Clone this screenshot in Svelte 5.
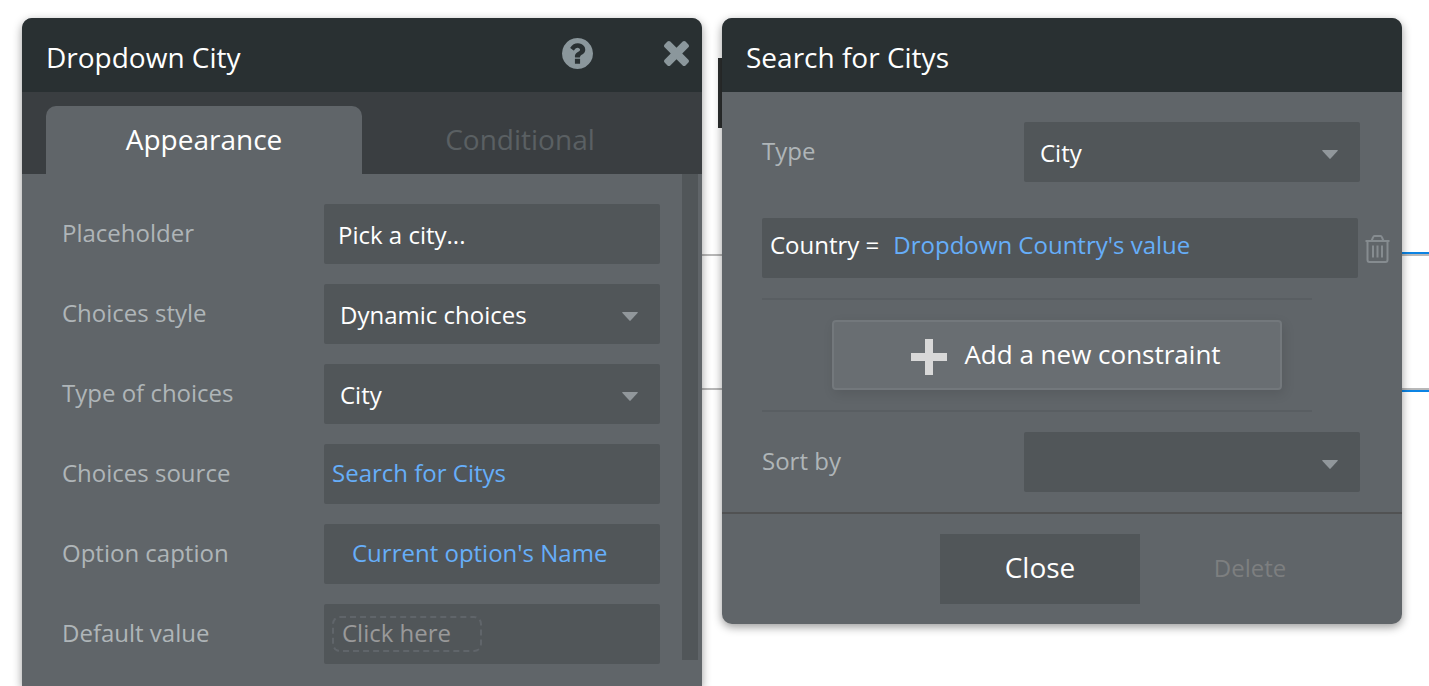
<script lang="ts">
	let placeholder = $state('Pick a city...');
	let choicesStyle = $state('Dynamic choices');
	let choicesType = $state('City');
	let searchType = $state('City');
	let sortBy = $state('');
	let activeTab = $state('Appearance');

	const tabs = ['Appearance', 'Conditional'];
</script>

{#snippet caret()}
	<svg class="caret" viewBox="0 0 16 9" aria-hidden="true">
		<path d="M0.8 0h14.4q0.8 0 0.6 0.8L8.6 8.6q-0.6 0.6-1.2 0L0.2 0.8Q0 0 0.8 0z" />
	</svg>
{/snippet}

<main>
	<div class="canvas" aria-hidden="true">
		<div class="heading-block"></div>
		<div class="outline"></div>
		<div class="selection"></div>
	</div>

	<section class="panel editor">
		<header>
			<h2>Dropdown City</h2>
			<button class="icon" aria-label="Help">
				<svg width="31" height="31" viewBox="128 128 1536 1536">
					<path
						d="M1024 1376v-192q0-14-9-23t-23-9h-192q-14 0-23 9t-9 23v192q0 14 9 23t23 9h192q14 0 23-9t9-23zm256-672q0-88-55.5-163t-138.5-116-170-41q-243 0-371 213-15 24 8 42l132 100q7 6 19 6 16 0 25-12 53-68 86-92 34-24 86-24 48 0 85.5 26t37.5 59q0 38-20 61t-68 45q-63 28-115.5 86.5t-52.5 125.5v36q0 14 9 23t23 9h192q14 0 23-9t9-23q0-19 21.5-49.5t54.5-49.5q32-18 49-28.5t46-35 44.5-48 28-60.5 12.5-81zm384 192q0 209-103 385.5t-279.5 279.5-385.5 103-385.5-103-279.5-279.5-103-385.5 103-385.5 279.5-279.5 385.5-103 385.5 103 279.5 279.5 103 385.5z"
					/>
				</svg>
			</button>
			<button class="icon" aria-label="Close editor">
				<svg width="25" height="25" viewBox="302 366 1188 1188">
					<path
						d="M1490 1322q0 40-28 68l-136 136q-28 28-68 28t-68-28l-294-294-294 294q-28 28-68 28t-68-28l-136-136q-28-28-28-68t28-68l294-294-294-294q-28-28-28-68t28-68l136-136q28-28 68-28t68 28l294 294 294-294q28-28 68-28t68 28l136 136q28 28 28 68t-28 68l-294 294 294 294q28 28 28 68z"
					/>
				</svg>
			</button>
		</header>

		<div class="tabs" role="tablist">
			{#each tabs as tab}
				<button
					role="tab"
					class:active={activeTab === tab}
					aria-selected={activeTab === tab}
					onclick={() => (activeTab = tab)}
				>
					{tab}
				</button>
			{/each}
		</div>

		<div class="scroll-area">
			<form>
				<div class="row">
					<label for="placeholder">Placeholder</label>
					<input id="placeholder" class="field" type="text" bind:value={placeholder} />
				</div>
				<div class="row">
					<label for="choices-style">Choices style</label>
					<div class="select">
						<select id="choices-style" class="field" bind:value={choicesStyle}>
							<option>Dynamic choices</option>
							<option>Static choices</option>
						</select>
						{@render caret()}
					</div>
				</div>
				<div class="row">
					<label for="choices-type">Type of choices</label>
					<div class="select">
						<select id="choices-type" class="field" bind:value={choicesType}>
							<option>City</option>
							<option>Country</option>
						</select>
						{@render caret()}
					</div>
				</div>
				<div class="row">
					<label for="choices-source">Choices source</label>
					<button id="choices-source" type="button" class="field expression">Search for Citys</button>
				</div>
				<div class="row">
					<label for="option-caption">Option caption</label>
					<button id="option-caption" type="button" class="field expression indented">
						Current option's Name
					</button>
				</div>
				<div class="row">
					<label for="default-value">Default value</label>
					<div class="field empty">
						<button id="default-value" type="button">Click here</button>
					</div>
				</div>
			</form>
			<div class="scrollbar"></div>
		</div>
	</section>

	<section class="panel search">
		<header>
			<h2>Search for Citys</h2>
		</header>

		<form>
			<div class="row">
				<label for="search-type">Type</label>
				<div class="select">
					<select id="search-type" class="field" bind:value={searchType}>
						<option>City</option>
						<option>Country</option>
					</select>
					{@render caret()}
				</div>
			</div>

			<div class="constraint">
				<div class="field condition">
					<span>Country =</span>
					<button type="button">Dropdown Country's value</button>
				</div>
				<button type="button" class="trash" aria-label="Remove constraint">
					<svg width="26" height="28" viewBox="0 0 26 28">
						<path d="M1.500 6h24M7.500 6l1.500-3.500q0.500-1.500 1.500-1.500h6q1 0 1.500 1.500l1.500 3.500" />
						<path d="M3.500 6v19q0 2 2 2h16q2 0 2-2V6" />
						<path class="thin" d="M9 10.500v12M13.500 10.500v12M18 10.500v12" />
					</svg>
				</button>
			</div>

			<div class="add">
				<button type="button">
					<svg width="36" height="36" viewBox="0 0 36 36" aria-hidden="true">
						<path d="M14 0h8v14h14v8H22v14h-8V22H0v-8h14z" />
					</svg>
					<span>Add a new constraint</span>
				</button>
			</div>

			<div class="row">
				<label for="sort-by">Sort by</label>
				<div class="select">
					<select id="sort-by" class="field" bind:value={sortBy}>
						<option value=""></option>
						<option>Name</option>
					</select>
					{@render caret()}
				</div>
			</div>
		</form>

		<footer>
			<button class="close">Close</button>
			<button class="delete">Delete</button>
		</footer>
	</section>
</main>

<style>
	:global(body) {
		margin: 0;
		background: #fff;
	}

	main {
		position: relative;
		display: flex;
		gap: 20px;
		box-sizing: border-box;
		min-height: 100vh;
		padding: 18px 27px 0 22px;
		overflow: hidden;
		font-family: 'Open Sans', 'Noto Sans', sans-serif;
		font-size: 24px;
		color: #fff;
	}

	button,
	input,
	select {
		margin: 0;
		padding: 0;
		border: 0;
		background: none;
		font: inherit;
		color: inherit;
	}

	button {
		cursor: pointer;
	}

	svg {
		display: block;
	}

	/* page being edited, visible behind the panels */
	.canvas {
		position: absolute;
		inset: 0;
	}

	.canvas div {
		position: absolute;
		box-sizing: border-box;
	}

	.heading-block {
		top: 58px;
		left: 718px;
		width: 40px;
		height: 70px;
		background: #2d2f2f;
	}

	.outline {
		top: 254px;
		left: 60px;
		right: -10px;
		height: 136px;
		border: 2px solid #b8b8b8;
	}

	.selection {
		top: 252px;
		left: 800px;
		right: -10px;
		height: 140px;
		border: 2px solid #0c84e4;
	}

	.panel {
		position: relative;
		flex: 1;
		min-width: 0;
		background: #606569;
		border-radius: 10px;
		box-shadow: 0 3px 10px rgba(0, 0, 0, 0.4);
	}

	.editor {
		display: flex;
		flex-direction: column;
		border-radius: 10px 10px 0 0;
	}

	.search {
		align-self: flex-start;
	}

	header {
		display: flex;
		align-items: center;
		gap: 71px;
		height: 74px;
		padding: 0 13px 0 24px;
		background: #293032;
		border-radius: 10px 10px 0 0;
	}

	h2 {
		flex: 1;
		margin: 0;
		padding-top: 4px;
		font-size: 28px;
		font-weight: 400;
	}

	.icon {
		padding-bottom: 3px;
		fill: #8b979c;
	}

	.tabs {
		display: flex;
		padding: 14px 24px 0;
		background: #3a3e41;
	}

	.tabs button {
		flex: 1;
		height: 68px;
		padding-bottom: 2px;
		border-radius: 10px 10px 0 0;
		font-size: 28px;
		color: #5a6063;
	}

	.tabs button.active {
		background: #606569;
		color: #fff;
	}

	.scroll-area {
		display: flex;
		flex: 1;
	}

	form {
		flex: 1;
	}

	.editor form {
		display: flex;
		flex-direction: column;
		gap: 20px;
		padding: 30px 22px 22px 40px;
	}

	.scrollbar {
		width: 16px;
		margin: 0 4px 26px 0;
		background: #515659;
	}

	.row {
		display: grid;
		grid-template-columns: 262px 1fr;
	}

	label {
		line-height: 58px;
		color: #afb5b8;
	}

	.field {
		box-sizing: border-box;
		width: 100%;
		min-width: 0;
		height: 60px;
		background: #515659;
		border-radius: 2px;
	}

	input.field {
		padding: 0 14px;
	}

	.select {
		display: grid;
		align-items: center;
	}

	.select > :global(*) {
		grid-area: 1 / 1;
	}

	select {
		appearance: none;
		padding: 0 50px 0 16px;
	}

	.caret {
		justify-self: end;
		width: 16px;
		height: 9px;
		margin: 5px 22px 0 0;
		fill: #91979b;
		pointer-events: none;
	}

	.expression {
		padding: 0 8px 4px;
		text-align: left;
		color: #66aef9;
	}

	.indented {
		padding-left: 28px;
	}

	.empty {
		padding: 12px 8px;
	}

	.empty button {
		display: block;
		box-sizing: border-box;
		width: 150px;
		height: 36px;
		padding: 0 8px 2px;
		border: 2px dashed #60656a;
		border-radius: 8px;
		line-height: 28px;
		text-align: left;
		color: #999;
	}

	.search form {
		padding: 30px 0 20px 40px;
	}

	.search .row {
		padding-right: 42px;
	}

	.constraint {
		display: flex;
		align-items: center;
		gap: 6px;
		margin: 36px 12px 20px 0;
	}

	.condition {
		display: flex;
		flex: 1;
		gap: 14px;
		padding: 0 8px;
		line-height: 54px;
	}

	.condition button {
		height: 54px;
		color: #66aef9;
	}

	.trash {
		padding-top: 2px;
		fill: none;
		stroke: #868c90;
		stroke-width: 2;
	}

	.thin {
		stroke-width: 2;
	}

	.add {
		margin: 0 90px 20px 0;
		padding: 20px 30px 20px 70px;
		border: solid #595e62;
		border-width: 2px 0;
	}

	.add button {
		display: flex;
		align-items: center;
		justify-content: center;
		gap: 17px;
		box-sizing: border-box;
		width: 100%;
		height: 70px;
		padding-left: 18px;
		border: 2px solid #73787c;
		border-radius: 4px;
		background: #696e72;
		box-shadow: 2px 4px 12px rgba(0, 0, 0, 0.1);
		font-size: 26px;
	}

	.add svg {
		margin-top: 4px;
		fill: #d8d8d8;
	}

	.add span {
		padding-bottom: 2px;
	}

	footer {
		display: flex;
		justify-content: flex-end;
		padding: 20px 42px 20px 0;
		border-top: 2px solid #515253;
	}

	footer button {
		height: 70px;
		padding-bottom: 4px;
	}

	.close {
		width: 200px;
		background: #515659;
		font-size: 28px;
	}

	.delete {
		width: 220px;
		color: #7d7f80;
	}
</style>
